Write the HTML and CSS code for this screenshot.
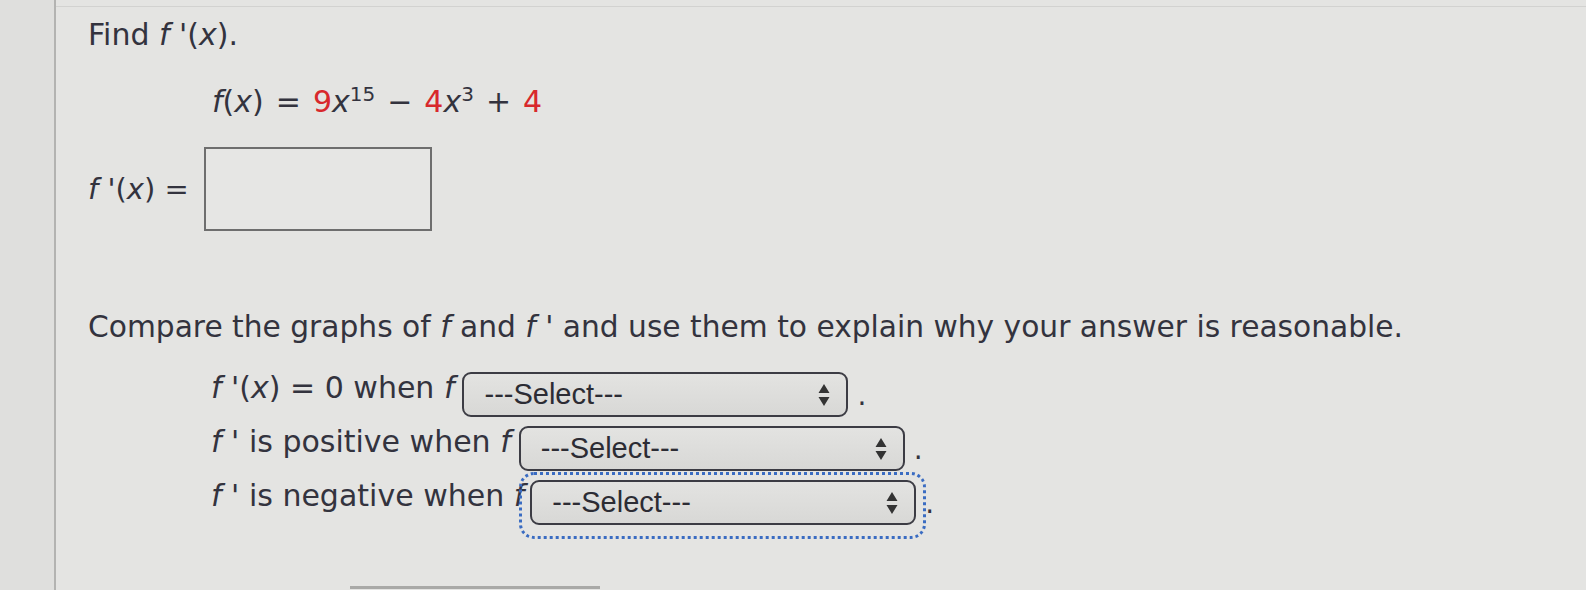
FILE: index.html
```html
<!DOCTYPE html>
<html lang="en">
<head>
<meta charset="utf-8">
<title>Find f'(x)</title>
<link rel="stylesheet" href="styles.css">
</head>
<body>
<div class="page">
  <div class="strip"></div>
  <div class="content">
    <p class="find">Find <i>f</i> '(<i>x</i>).</p>
    <p class="formula"><i>f</i>(<i>x</i>)<span class="op">=</span><span class="red">9</span><i>x</i><sup>15</sup><span class="op">−</span><span class="red">4</span><i>x</i><sup>3</sup><span class="op">+</span><span class="red">4</span></p>
    <div class="answer-row">
      <span class="label"><i>f</i> '(<i>x</i>) =</span>
      <span class="answer-box"></span>
    </div>
    <p class="compare">Compare the graphs of <i>f</i> and <i>f</i> ' and use them to explain why your answer is reasonable.</p>
    <div class="rows">
      <div class="row">
        <span class="label"><i>f</i> '(<i>x</i>) = 0 when <i>f</i></span>
        <span class="select"><span class="select-text">---Select---</span><svg class="arrows" width="12" height="24" viewBox="0 0 12 24"><path d="M6 1 L11.5 10 L0.5 10 Z M6 23 L11.5 14 L0.5 14 Z" fill="#333"/></svg></span>
        <span class="dot">.</span>
      </div>
      <div class="row">
        <span class="label"><i>f</i> ' is positive when <i>f</i></span>
        <span class="select"><span class="select-text">---Select---</span><svg class="arrows" width="12" height="24" viewBox="0 0 12 24"><path d="M6 1 L11.5 10 L0.5 10 Z M6 23 L11.5 14 L0.5 14 Z" fill="#333"/></svg></span>
        <span class="dot">.</span>
      </div>
      <div class="row">
        <span class="label"><i>f</i> ' is negative when <i>f</i></span>
        <span class="select focused"><span class="select-text">---Select---</span><svg class="arrows" width="12" height="24" viewBox="0 0 12 24"><path d="M6 1 L11.5 10 L0.5 10 Z M6 23 L11.5 14 L0.5 14 Z" fill="#333"/></svg></span>
        <span class="dot">.</span>
      </div>
    </div>
    <div class="bottom-rule"></div>
  </div>
</div>
</body>
</html>
```
FILE: styles.css
```css
html, body {
  margin: 0;
  padding: 0;
}
body {
  background: #e4e4e2;
  font-family: "DejaVu Sans", Verdana, sans-serif;
  color: #33333e;
  width: 1586px;
  height: 590px;
  overflow: hidden;
}
.page {
  display: flex;
  height: 590px;
}
.strip {
  width: 54px;
  flex: none;
  background: #dfdfdd;
  border-right: 2px solid #b3b3b1;
}
.content {
  flex: 1;
  margin-top: 6px;
  border-top: 1px solid #d2d2d0;
  padding-left: 32px;
}
p {
  margin: 0;
}
i {
  font-style: italic;
}
.find {
  font-size: 30px;
  line-height: 36px;
  margin-top: 10px;
}
.formula {
  font-size: 30px;
  line-height: 36px;
  margin-top: 31px;
  padding-left: 124px;
}
.formula .op {
  margin: 0 12px;
}
.formula sup {
  font-size: 20px;
  line-height: 0;
  vertical-align: 11px;
}
.red {
  color: #d8282c;
}
.answer-row {
  display: flex;
  align-items: center;
  margin-top: 27px;
  gap: 15px;
}
.label {
  font-size: 30px;
  line-height: 36px;
  white-space: pre;
}
.answer-row .label {
  font-size: 29px;
}
.answer-box {
  width: 224px;
  height: 80px;
  border: 2px solid #6e6e6e;
  background: #e6e6e4;
}
.compare {
  font-size: 29.7px;
  line-height: 36px;
  margin-top: 78px;
}
.rows {
  margin-top: 16px;
  padding-left: 123px;
}
.row {
  display: flex;
  align-items: center;
  height: 54px;
}
.select {
  position: relative;
  display: flex;
  align-items: center;
  justify-content: space-between;
  box-sizing: border-box;
  width: 386px;
  height: 45px;
  margin-top: 13px;
  margin-left: 8px;
  padding: 0 16px 0 20px;
  border: 2px solid #3c3c44;
  border-radius: 9px;
  background: linear-gradient(#e3e3e1, #d8d8d6);
  font-family: "Liberation Sans", Arial, sans-serif;
  font-size: 29px;
  color: #2c2c34;
}
.select.focused {
  margin-left: 6px;
}
.select.focused::after {
  content: "";
  position: absolute;
  top: -10px;
  bottom: -16px;
  left: -13px;
  right: -12px;
  border: 3px dotted #3a6cc2;
  border-radius: 15px;
  pointer-events: none;
}
.arrows {
  flex: none;
}
.dot {
  font-size: 28px;
  margin-left: 9px;
  margin-top: 14px;
}
.bottom-rule {
  margin-top: 63px;
  margin-left: 262px;
  width: 250px;
  height: 3px;
  background: #a9a9a7;
}
```
